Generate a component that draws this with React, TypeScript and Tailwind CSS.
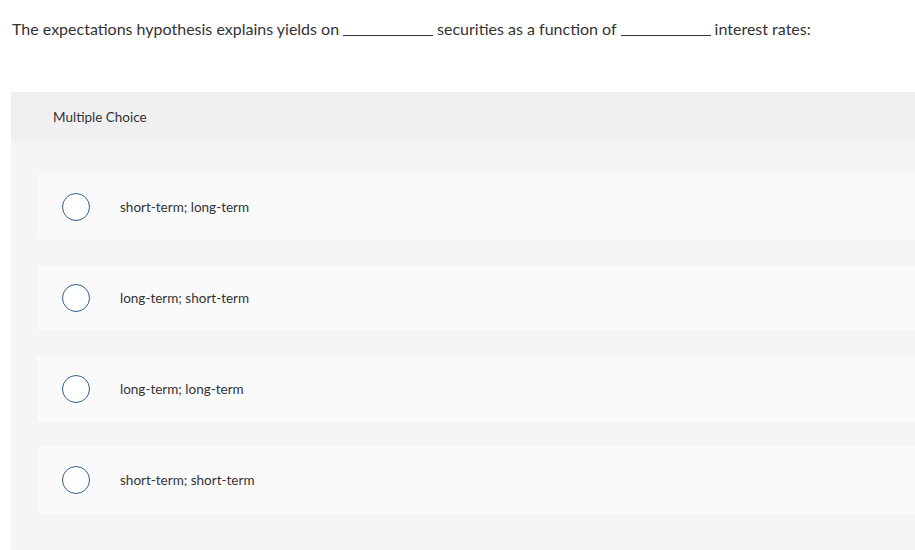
const choices = [
  'short-term; long-term',
  'long-term; short-term',
  'long-term; long-term',
  'short-term; short-term',
];

function Blank() {
  return <span className="inline-block w-[90px] border-b border-[#333] mx-[4px] translate-y-[1px]" />;
}

export default function App() {
  return (
    <div className="w-[915px] h-[550px] overflow-hidden bg-white text-[#333]" style={{ fontFamily: 'Lato, "Open Sans", sans-serif' }}>
      {/* Question */}
      <p className="pl-[12px] pt-[18px] h-[92px] text-[16px] leading-[22px]">
        The expectations hypothesis explains yields on<Blank />securities as a function of<Blank />interest rates:
      </p>

      {/* Answer panel */}
      <div className="ml-[11px] bg-[#f5f5f5] pb-[40px]">
        <div className="h-[50px] bg-[#f0f0f0] pl-[42px] flex items-center text-[13.5px]">Multiple Choice</div>
        <div className="pt-[32px] pl-[26px] flex flex-col gap-[25px]">
          {choices.map((c) => (
            <div key={c} className="h-[66px] bg-[#fafafa] rounded-l-[4px] flex items-center pl-[25px]">
              <span className="w-[28px] h-[28px] rounded-full border-[1.5px] border-[#2f5f8f] bg-white shrink-0" />
              <span className="ml-[30px] text-[13.5px]">{c}</span>
            </div>
          ))}
        </div>
      </div>
    </div>
  );
}
